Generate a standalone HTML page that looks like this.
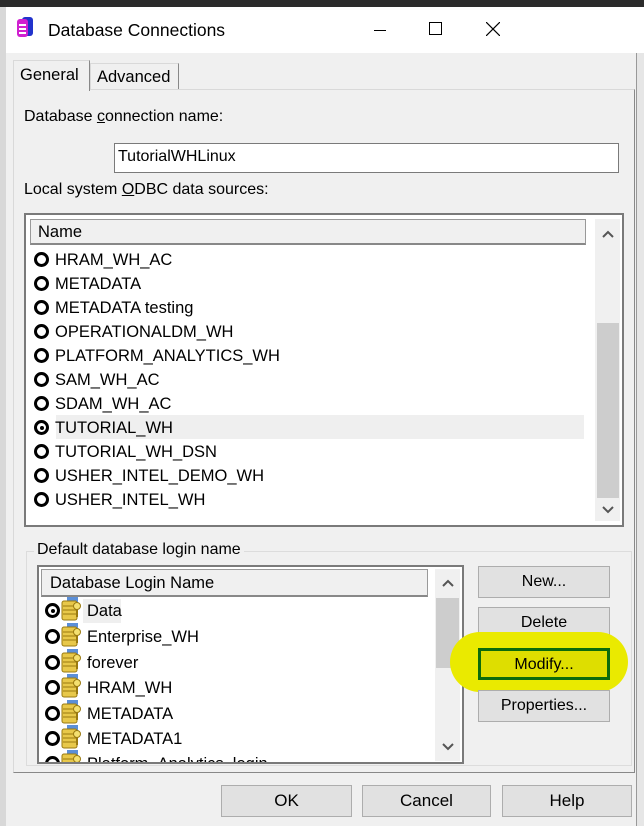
<!DOCTYPE html>
<html><head><style>
*{margin:0;padding:0;box-sizing:border-box}
body{width:644px;height:826px;overflow:hidden;background:#f0f0f0;font-family:"Liberation Sans",sans-serif;position:relative;color:#000}
.a{position:absolute}
.t{font-size:16px;white-space:nowrap}
.btn{position:absolute;background:#e1e1e1;border:1px solid #adadad;font-size:15px;text-align:center}
.row{position:absolute;left:8px;font-size:16.5px;height:24px;line-height:24px;white-space:nowrap}
.rad{display:inline-block;width:15px;height:15px;border:3px solid #000;border-radius:50%;vertical-align:-2px;margin-right:6px;position:relative}
.rad.s::after{content:"";position:absolute;left:2.5px;top:2.5px;width:4px;height:4px;background:#000;border-radius:50%}
.ic{display:inline-block;width:20px;height:24px;vertical-align:-5px;margin-right:6px}
.lg .rad{margin-right:1px}
</style></head><body>
<div class="a" style="left:0;top:0;width:644px;height:7px;background:#2b2b2b"></div>
<div class="a" style="left:0;top:7px;width:6px;height:819px;background:#d8d8d8"></div>
<div class="a" style="left:636px;top:53px;width:8px;height:773px;background:#e6e6e6;border-left:1px solid #999"></div>
<div class="a" style="left:6px;top:7px;width:638px;height:46px;background:#fff"></div>
<svg class="a" style="left:16px;top:16px" width="18" height="22"><rect x="6" y="1" width="11" height="19" rx="3" fill="#2233cc"/><rect x="1" y="3" width="11" height="18" rx="3" fill="#d020d0"/><rect x="3" y="8" width="7" height="2" fill="#fff"/><rect x="3" y="12" width="7" height="2" fill="#fff"/><rect x="3" y="16" width="7" height="2" fill="#fff"/></svg>
<div class="a" style="left:48px;top:20px;font-size:17.5px">Database Connections</div>
<div class="a" style="left:374px;top:30px;width:12px;height:1px;background:#000"></div>
<div class="a" style="left:429px;top:22px;width:13px;height:13px;border:1px solid #000"></div>
<svg class="a" style="left:486px;top:22px" width="14" height="14"><path d="M0 0L14 14M14 0L0 14" stroke="#000" stroke-width="1.2"/></svg>
<div class="a" style="left:13px;top:89px;width:622px;height:684px;border:1px solid #d9d9d9;border-right-color:#888;border-bottom-color:#888;background:#f0f0f0"></div>
<div class="a" style="left:13px;top:60px;width:77px;height:31px;border:1px solid #d9d9d9;border-right-color:#888;border-bottom:none;background:#f0f0f0"></div>
<div class="a t" style="left:20px;top:66px;font-size:16.5px">General</div>
<div class="a" style="left:90px;top:63px;width:89px;height:26px;border:1px solid #d9d9d9;border-right-color:#888;border-bottom:none"></div>
<div class="a t" style="left:97px;top:68px;font-size:16.5px">Advanced</div>
<div class="a t" style="left:24px;top:108px">Database <u>c</u>onnection name:</div>
<div class="a" style="left:114px;top:143px;width:505px;height:30px;background:#fff;border:1px solid #7a7a7a"></div>
<div class="a t" style="left:118px;top:148px">TutorialWHLinux</div>
<div class="a t" style="left:24px;top:181px">Local system <u>O</u>DBC data sources:</div>
<div class="a" style="left:24px;top:213px;width:600px;height:314px;background:#fff;border:2px solid #7a7a7a;overflow:hidden">
 <div class="a" style="left:4px;top:4px;width:556px;height:26px;background:#f0f0f0;border:1px solid #999;border-bottom:2px solid #888"></div>
 <div class="a" style="left:12px;top:8px;font-size:16.5px">Name</div>
 <div class="a" style="left:569px;top:4px;width:25px;height:302px;background:#f0f0f0"></div>
 <div class="a" style="left:571px;top:108px;width:22px;height:175px;background:#cdcdcd"></div>
 <svg class="a" style="left:575px;top:14px" width="14" height="10"><path d="M2 8L7 3L12 8" stroke="#555" stroke-width="2" fill="none"/></svg>
 <svg class="a" style="left:575px;top:290px" width="14" height="10"><path d="M2 2L7 7L12 2" stroke="#555" stroke-width="2" fill="none"/></svg>
 <div class="a" style="left:30px;top:200px;width:528px;height:24px;background:#efefef"></div>
 <div class="row" style="top:33px"><span class="rad"></span>HRAM_WH_AC</div>
 <div class="row" style="top:57px"><span class="rad"></span>METADATA</div>
 <div class="row" style="top:81px"><span class="rad"></span>METADATA testing</div>
 <div class="row" style="top:105px"><span class="rad"></span>OPERATIONALDM_WH</div>
 <div class="row" style="top:129px"><span class="rad"></span>PLATFORM_ANALYTICS_WH</div>
 <div class="row" style="top:153px"><span class="rad"></span>SAM_WH_AC</div>
 <div class="row" style="top:177px"><span class="rad"></span>SDAM_WH_AC</div>
 <div class="row" style="top:201px"><span class="rad s"></span>TUTORIAL_WH</div>
 <div class="row" style="top:225px"><span class="rad"></span>TUTORIAL_WH_DSN</div>
 <div class="row" style="top:249px"><span class="rad"></span>USHER_INTEL_DEMO_WH</div>
 <div class="row" style="top:273px"><span class="rad"></span>USHER_INTEL_WH</div>
</div>
<div class="a" style="left:26px;top:551px;width:606px;height:215px;border:1px solid #dcdcdc"></div>
<div class="a t" style="left:34px;top:541px;background:#f0f0f0;padding:0 3px">Default database login name</div>
<div class="a" style="left:37px;top:565px;width:427px;height:199px;background:#fff;border:2px solid #7a7a7a;overflow:hidden">
 <div class="a" style="left:2px;top:2px;width:387px;height:28px;background:#f0f0f0;border:1px solid #999;border-bottom:2px solid #888"></div>
 <div class="a" style="left:11px;top:7px;font-size:16.5px">Database Login Name</div>
 <div class="a" style="left:396px;top:2px;width:25px;height:192px;background:#f0f0f0"></div>
 <div class="a" style="left:397px;top:31px;width:23px;height:70px;background:#cdcdcd"></div>
 <svg class="a" style="left:402px;top:11px" width="14" height="10"><path d="M2 8L7 3L12 8" stroke="#555" stroke-width="2" fill="none"/></svg>
 <svg class="a" style="left:402px;top:175px" width="14" height="10"><path d="M2 2L7 7L12 2" stroke="#555" stroke-width="2" fill="none"/></svg>
 <div class="a" style="left:44px;top:32px;width:38px;height:24px;background:#efefef"></div>
</div>
<div class="a lg" style="left:39px;top:597px;width:395px;height:165px;overflow:hidden">
 <svg width="0" height="0" style="position:absolute"><defs><g id="d"><rect x="6" y="0" width="11" height="6" fill="#5b8fd8"/><rect x="1" y="4" width="15" height="19" rx="2" fill="#e8c84a" stroke="#9a7a10"/><path d="M2 9h13M2 13h13M2 17h13" stroke="#9a7a10"/><circle cx="16" cy="9" r="3.5" fill="#f4e070" stroke="#9a7a10"/><path d="M16 12v8" stroke="#9a7a10" stroke-width="2"/></g></defs></svg>
 <div class="row" style="left:6px;top:0"><span class="rad s"></span><svg class="ic"><use href="#d"/></svg>Data</div>
 <div class="row" style="left:6px;top:26px"><span class="rad"></span><svg class="ic"><use href="#d"/></svg>Enterprise_WH</div>
 <div class="row" style="left:6px;top:52px"><span class="rad"></span><svg class="ic"><use href="#d"/></svg>forever</div>
 <div class="row" style="left:6px;top:77px"><span class="rad"></span><svg class="ic"><use href="#d"/></svg>HRAM_WH</div>
 <div class="row" style="left:6px;top:103px"><span class="rad"></span><svg class="ic"><use href="#d"/></svg>METADATA</div>
 <div class="row" style="left:6px;top:128px"><span class="rad"></span><svg class="ic"><use href="#d"/></svg>METADATA1</div>
 <div class="row" style="left:6px;top:153px"><span class="rad"></span><svg class="ic"><use href="#d"/></svg>Platform_Analytics_login</div>
</div>
<div class="btn" style="left:478px;top:566px;width:132px;height:32px;line-height:30px;font-size:16px">New...</div>
<div class="btn" style="left:478px;top:607px;width:132px;height:32px;line-height:30px;font-size:16px">Delete</div>
<div class="a" style="left:450px;top:632px;width:178px;height:60px;background:#eaea00;border-radius:30px"></div>
<div class="btn" style="left:478px;top:648px;width:132px;height:32px;line-height:27px;background:#dede00;border:3px solid #0b6b0b;font-size:16px">Modify...</div>
<div class="btn" style="left:478px;top:690px;width:132px;height:32px;line-height:30px;font-size:16px">Properties...</div>
<div class="btn" style="left:221px;top:785px;width:131px;height:32px;line-height:30px;font-size:17px">OK</div>
<div class="btn" style="left:362px;top:785px;width:129px;height:32px;line-height:30px;font-size:17px">Cancel</div>
<div class="btn" style="left:502px;top:785px;width:130px;height:32px;line-height:30px;font-size:17px">Help</div>
</body></html>
